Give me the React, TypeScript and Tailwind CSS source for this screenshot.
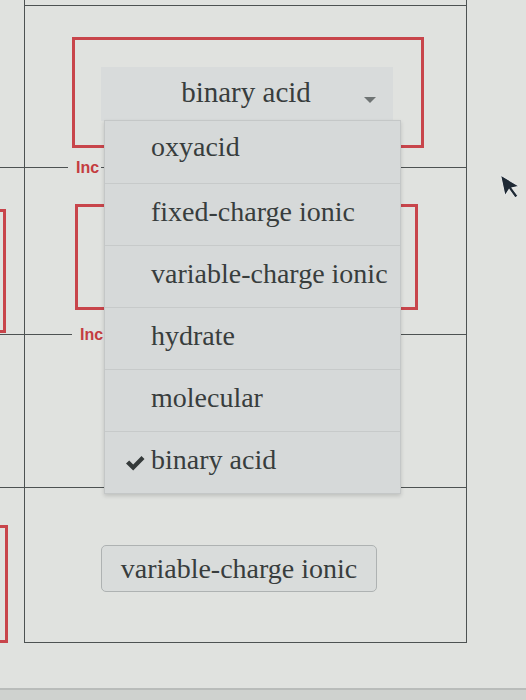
import React from 'react';

const OPTIONS = [
    'oxyacid',
    'fixed-charge ionic',
    'variable-charge ionic',
    'hydrate',
    'molecular',
    'binary acid',
];

const SELECTED = 'binary acid';

function Check() {
    return (
        <svg className="w-[22px] h-[18px]" viewBox="0 0 22 18">
            <path d="M2 9.5l3.2-3 4 4L17.5 2l3 3L9.2 16.5z" fill="#353a3a" />
        </svg>
    );
}

function Cursor() {
    return (
        <svg className="w-[17px] h-[28px] rotate-[-12deg]" viewBox="0 0 16 26">
            <path d="M1 1v20l5-5 4 9 3-1.5-4-8.5h7z" fill="#1f2a35" stroke="#e8eaea" strokeWidth={1} />
        </svg>
    );
}

function IncLabel({ left }: { left: string }) {
    return (
        <span
            className={`absolute ${left} bottom-[-10px] bg-[#e0e2df] pl-[8px] pr-[2px] text-[16px] font-bold leading-[19px] text-[#c43c40]`}
            style={{ fontFamily: '"Liberation Sans", Arial, sans-serif' }}
        >
            Inc
        </span>
    );
}

export default function App() {
    return (
        <div
            className="relative w-[526px] h-[700px] overflow-hidden bg-[#e0e2df] text-[#383d3d]"
            style={{ fontFamily: '"Liberation Serif", "Times New Roman", serif' }}
        >
            {/* Table */}
            <div className="w-[467px]">
                {/* top sliver of previous row */}
                <div className="flex h-[5px]">
                    <div className="w-[24px]" />
                    <div className="flex-1 border-x border-[#4d5252]" />
                </div>

                {/* Row 1 */}
                <div className="relative flex h-[163px] border-b border-[#4d5252]">
                    <div className="w-[24px]" />
                    <div className="flex-1 border-x border-t border-[#4d5252]">
                        <div className="ml-[47px] mt-[31px] w-[352px] h-[111px] border-[3px] border-[#c8454b]" />
                    </div>
                    <IncLabel left="left-[68px]" />
                </div>

                {/* Row 2 */}
                <div className="relative flex h-[167px] border-b border-[#4d5252]">
                    <div className="w-[24px]">
                        <div className="mt-[41px] w-[6px] h-[124px] border-y-[3px] border-r-[3px] border-[#c8454b]" />
                    </div>
                    <div className="flex-1 border-x border-[#4d5252]">
                        <div className="ml-[50px] mt-[36px] w-[343px] h-[106px] border-[3px] border-[#c8454b]" />
                    </div>
                    <IncLabel left="left-[72px]" />
                </div>

                {/* Row 3 */}
                <div className="flex h-[153px] border-b border-[#4d5252]">
                    <div className="w-[24px]" />
                    <div className="flex-1 border-x border-[#4d5252]" />
                </div>

                {/* Row 4 */}
                <div className="flex h-[155px]">
                    <div className="w-[24px]">
                        <div className="mt-[37px] w-[8px] h-[118px] border-y-[3px] border-r-[3px] border-[#c8454b]" />
                    </div>
                    <div className="flex-1 border-x border-b border-[#4d5252]">
                        <div className="ml-[76px] mt-[57px] w-[276px] h-[47px] rounded-[5px] border border-[#aeb2b2] bg-[#d9dcdb] flex items-center justify-center text-[28px] leading-none">
                            variable-charge ionic
                        </div>
                    </div>
                </div>
            </div>

            {/* bottom edge of screen */}
            <div className="absolute left-0 bottom-0 w-full h-[12px] border-t-2 border-[#b9bcba] bg-[#cfd2cf]" />

            {/* mouse cursor */}
            <div className="absolute left-[502px] top-[172px]">
                <Cursor />
            </div>

            {/* Open select */}
            <div className="absolute left-[101px] top-[67px] w-[292px] h-[54px] bg-[#d8dbdb] flex items-center justify-center text-[29px] leading-none">
                <span className="mr-[2px] pb-[3px]">{SELECTED}</span>
                <span className="absolute right-[17px] top-[30px] w-0 h-0 border-x-[6px] border-t-[6px] border-x-transparent border-t-[#6f7474]" />
            </div>
            <ul className="absolute left-[104px] top-[120px] w-[297px] bg-[#d6d9d9] border border-[#c4c7c7] shadow-[0_2px_4px_rgba(0,0,0,0.15)]">
                {OPTIONS.map((opt, i) => (
                    <li
                        key={opt}
                        className={`flex items-center h-[62px] text-[28px] leading-none ${i > 0 ? 'border-t border-[#c7caca]' : ''}`}
                    >
                        <span className="w-[46px] flex justify-end pr-[5px]">
                            {opt === SELECTED && <Check />}
                        </span>
                        <span className={i === 0 ? 'pb-[10px]' : 'pb-[5px]'}>{opt}</span>
                    </li>
                ))}
            </ul>
        </div>
    );
}
